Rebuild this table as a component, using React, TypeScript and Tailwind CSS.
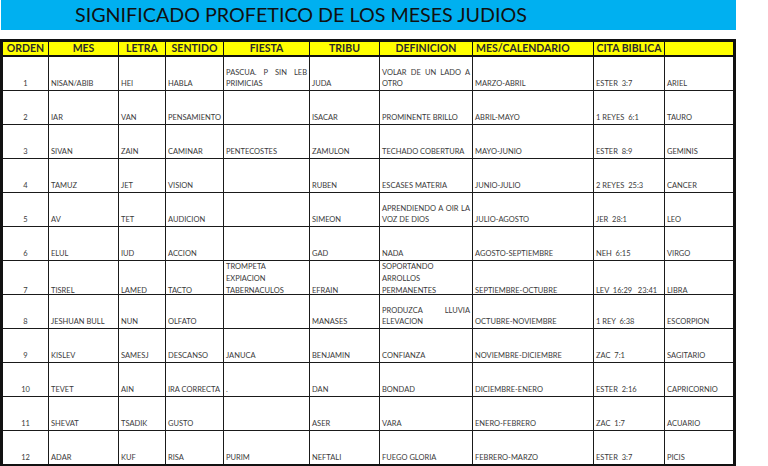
import React from "react";

type Cell = string | string[];

const COLS = "grid-cols-[46px_70px_47px_58px_86px_70px_93px_121px_71px_68px]";

const HEADERS = [
  { label: "ORDEN", align: "justify-center" },
  { label: "MES", align: "justify-center" },
  { label: "LETRA", align: "justify-center" },
  { label: "SENTIDO", align: "justify-center" },
  { label: "FIESTA", align: "justify-center" },
  { label: "TRIBU", align: "justify-center" },
  { label: "DEFINICION", align: "justify-center" },
  { label: "MES/CALENDARIO", align: "justify-start pl-[3px]" },
  { label: "CITA BIBLICA", align: "justify-center" },
  { label: "", align: "justify-center" },
];

const ROWS: Cell[][] = [
  ["1", "NISAN/ABIB", "HEI", "HABLA", ["PASCUA.  P  SIN  LEB", "PRIMICIAS"], "JUDA", ["VOLAR  DE  UN  LADO  A", "OTRO"], "MARZO-ABRIL", "ESTER  3:7", "ARIEL"],
  ["2", "IAR", "VAN", "PENSAMIENTO", "", "ISACAR", "PROMINENTE BRILLO", "ABRIL-MAYO", "1 REYES  6:1", "TAURO"],
  ["3", "SIVAN", "ZAIN", "CAMINAR", "PENTECOSTES", "ZAMULON", "TECHADO COBERTURA", "MAYO-JUNIO", "ESTER  8:9", "GEMINIS"],
  ["4", "TAMUZ", "JET", "VISION", "", "RUBEN", "ESCASES MATERIA", "JUNIO-JULIO", "2 REYES  25:3", "CANCER"],
  ["5", "AV", "TET", "AUDICION", "", "SIMEON", ["APRENDIENDO A OIR LA", "VOZ DE DIOS"], "JULIO-AGOSTO", "JER  28:1", "LEO"],
  ["6", "ELUL", "IUD", "ACCION", "", "GAD", "NADA", "AGOSTO-SEPTIEMBRE", "NEH  6:15", "VIRGO"],
  ["7", "TISREL", "LAMED", "TACTO", ["TROMPETA", "EXPIACION", "TABERNACULOS"], "EFRAIN", ["SOPORTANDO", "ARROLLOS", "PERMANENTES"], "SEPTIEMBRE-OCTUBRE", "LEV  16:29   23:41", "LIBRA"],
  ["8", "JESHUAN BULL", "NUN", "OLFATO", "", "MANASES", ["PRODUZCA LLUVIA", "ELEVACION"], "OCTUBRE-NOVIEMBRE", "1 REY  6:38", "ESCORPION"],
  ["9", "KISLEV", "SAMESJ", "DESCANSO", "JANUCA", "BENJAMIN", "CONFIANZA", "NOVIEMBRE-DICIEMBRE", "ZAC  7:1", "SAGITARIO"],
  ["10", "TEVET", "AIN", "IRA CORRECTA", ".", "DAN", "BONDAD", "DICIEMBRE-ENERO", "ESTER  2:16", "CAPRICORNIO"],
  ["11", "SHEVAT", "TSADIK", "GUSTO", "", "ASER", "VARA", "ENERO-FEBRERO", "ZAC  1:7", "ACUARIO"],
  ["12", "ADAR", "KUF", "RISA", "PURIM", "NEFTALI", "FUEGO GLORIA", "FEBRERO-MARZO", "ESTER  3:7", "PICIS"],
];

function CellBody({ value, col, tall }: { value: Cell; col: number; tall: boolean }) {
  const lines = Array.isArray(value) ? value : [value];
  return (
    <div
      className={`flex flex-col justify-end px-[2px] pb-[1px] whitespace-pre ${
        tall ? "leading-[12px]" : "leading-[11px]"
      } ${col === 0 ? "items-center" : ""} ${col < 9 ? "border-r border-[#1a1a1a]" : ""}`}
    >
      {lines.map((line, i) => (
        <div
          key={i}
          className={
            i < lines.length - 1
              ? "text-justify [text-align-last:justify] whitespace-normal"
              : ""
          }
        >
          {line}
        </div>
      ))}
    </div>
  );
}

export default function App() {
  return (
    <div className="w-[768px] h-[466px] bg-white overflow-hidden font-['Lato','Open_Sans',sans-serif]">
      {/* Title banner */}
      <div className="ml-[1px] w-[735px] h-[30px] bg-[#00b0f0] flex items-center pl-[74px]">
        <h1 className="text-[19.7px] text-[#111]">
          SIGNIFICADO PROFETICO DE LOS MESES JUDIOS
        </h1>
      </div>

      {/* Table */}
      <div className="mt-[9px] w-[736px] border-l-[3px] border-r-[3px] border-t-[3px] border-b-[2px] border-[#111]">
        <div className={`grid ${COLS} h-[15px] bg-[#ffff00] border-b-2 border-[#111]`}>
          {HEADERS.map((h, i) => (
            <div
              key={i}
              className={`flex items-center ${h.align} text-[10.5px] font-bold leading-none text-[#2a2a2a] ${
                i < 9 ? "border-r border-[#111]" : ""
              }`}
            >
              {h.label}
            </div>
          ))}
        </div>

        {ROWS.map((row, r) => (
          <div
            key={r}
            className={`grid ${COLS} text-[7.5px] text-[#3a3a3a] ${
              r < ROWS.length - 1 ? "h-[34px] border-b border-[#1a1a1a]" : "h-[33px]"
            }`}
          >
            {row.map((cell, c) => (
              <CellBody key={c} value={cell} col={c} tall={r === 6} />
            ))}
          </div>
        ))}
      </div>
    </div>
  );
}
